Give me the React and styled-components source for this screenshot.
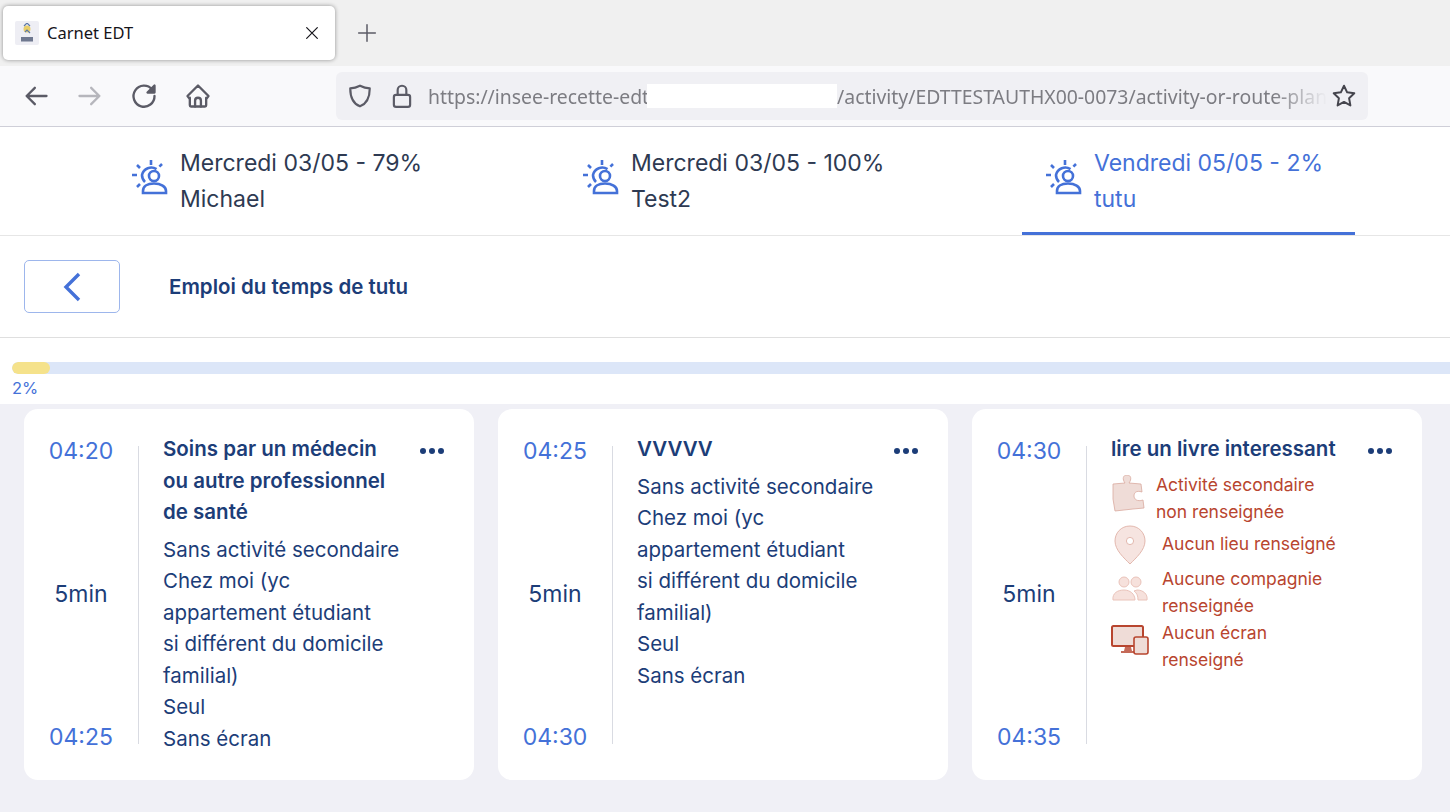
import React from "react";
import styled, { createGlobalStyle } from "styled-components";

const Global = createGlobalStyle`
  html, body { margin: 0; padding: 0; background: #fff; }
  body { font-family: "Inter", "Liberation Sans", sans-serif; overflow: hidden; }
  #root { width: 1450px; height: 812px; }
`;

const Page = styled.div`
  width: 1450px;
  height: 812px;
  display: flex;
  flex-direction: column;
  overflow: hidden;
`;

/* Browser chrome */
const TabStrip = styled.div`
  height: 66px;
  background: #f0f0f0;
  display: flex;
  align-items: center;
  box-sizing: border-box;
  padding: 0 0 0 3px;
  flex: none;
`;
const BrowserTab = styled.div`
  width: 332px;
  height: 54px;
  margin-top: -1px;
  background: #fff;
  border-radius: 5px;
  box-shadow: 0 0 4px rgba(0, 0, 0, 0.4);
  display: flex;
  align-items: center;
  padding: 0 15px 0 12px;
  box-sizing: border-box;
`;
const Favicon = styled.div`
  width: 24px;
  height: 24px;
  background: #eeeef4;
  border-radius: 2px;
  display: flex;
  align-items: center;
  justify-content: center;
  flex: none;
`;
const TabTitle = styled.span`
  flex: 1;
  margin-left: 8px;
  font-family: "Noto Sans", sans-serif;
  font-size: 16.5px;
  color: #15141a;
`;
const NewTab = styled.div`
  margin-left: 22px;
  display: flex;
`;
const Toolbar = styled.div`
  height: 60px;
  background: #f9f9fb;
  border-bottom: 1px solid #cfcfd8;
  display: flex;
  align-items: center;
  flex: none;
  box-sizing: content-box;
`;
const NavIcons = styled.div`
  display: flex;
  align-items: center;
  gap: 26px;
  padding-left: 22px;
  width: 336px;
  box-sizing: border-box;
`;
const UrlBar = styled.div`
  width: 1032px;
  height: 48px;
  background: #f0f0f4;
  border-radius: 6px;
  display: flex;
  align-items: center;
  padding: 0 11px 0 11px;
  box-sizing: border-box;
`;
const UrlIcons = styled.div`
  display: flex;
  align-items: center;
  gap: 16px;
  flex: none;
`;
const UrlText = styled.div`
  flex: 1;
  min-width: 0;
  margin: 0 4px 0 13px;
  font-family: "Noto Sans", sans-serif;
  font-size: 19.4px;
  color: #7c7c82;
  white-space: nowrap;
  overflow: hidden;
  display: flex;
  align-items: center;
  -webkit-mask-image: linear-gradient(to right, #000 94%, transparent 100%);
  mask-image: linear-gradient(to right, #000 94%, transparent 100%);
`;
const Redaction = styled.span`
  display: inline-block;
  width: 190px;
  height: 24px;
  margin-left: -2px;
  background: #fff;
  flex: none;
`;

/* Day tabs */
const DayTabs = styled.div`
  height: 108px;
  border-bottom: 1px solid #e6e6e6;
  display: flex;
  gap: 108px;
  padding-left: 108px;
  background: #fff;
  flex: none;
`;
const DayTab = styled.div`
  display: flex;
  align-items: flex-start;
  width: ${(p) => p.$width}px;
  padding: 18px 0 0 24px;
  height: 108px;
  box-sizing: border-box;
  flex: none;
  border-bottom: 3px solid ${(p) => (p.$active ? "#4471d8" : "transparent")};
  color: ${(p) => (p.$active ? "#4471d8" : "#2e3a52")};
`;
const DayIcon = styled.div`
  width: 36px;
  height: 36px;
  margin: 14px 12px 0 0;
  flex: none;
`;
const DayLabel = styled.div`
  font-size: 23px;
  line-height: 36px;
  white-space: nowrap;
`;

/* Page heading */
const Heading = styled.div`
  height: 101px;
  border-bottom: 1px solid #dfdfdf;
  display: flex;
  align-items: center;
  padding-left: 24px;
  box-sizing: content-box;
  flex: none;
`;
const BackButton = styled.div`
  width: 96px;
  height: 53px;
  border: 1px solid #9db6ec;
  border-radius: 5px;
  box-sizing: border-box;
  display: flex;
  align-items: center;
  justify-content: center;
  margin: 0 49px 0 0;
`;
const Title = styled.h1`
  margin: 0;
  font-size: 20.5px;
  font-weight: 600;
  color: #1c3d78;
`;

/* Progress */
const ProgressArea = styled.div`
  height: 66px;
  padding: 24px 0 0 12px;
  box-sizing: border-box;
  background: #fff;
  flex: none;
`;
const Track = styled.div`
  height: 12px;
  background: #dce6f8;
  border-radius: 6px 0 0 6px;
  overflow: hidden;
`;
const Fill = styled.div`
  height: 100%;
  background: #f5e28b;
  border-radius: 6px;
`;
const ProgressValue = styled.div`
  font-size: 16.5px;
  line-height: 20px;
  margin-top: 4px;
  color: #4471d8;
`;

/* Cards */
const Board = styled.div`
  flex: 1;
  background: #f0f0f6;
  display: flex;
  gap: 24px;
  padding: 5px 24px 0;
`;
const Card = styled.div`
  width: 450px;
  height: 371px;
  background: #fff;
  border-radius: 14px;
  display: flex;
  padding: 24px 0 24px 0;
  box-sizing: border-box;
  position: relative;
  flex: none;
`;
const TimeColumn = styled.div`
  width: 115px;
  height: 298px;
  margin-top: 13px;
  border-right: 1px solid #d9dbe2;
  display: flex;
  flex-direction: column;
  justify-content: space-between;
  align-items: center;
  box-sizing: border-box;
  flex: none;
`;
const Time = styled.div`
  font-size: 23px;
  line-height: 28px;
  color: #4471d8;
  width: 90px;
  text-align: center;
  margin: ${(p) => (p.$end ? "0 0 -7px" : "-9px 0 0")};
`;
const Duration = styled.div`
  font-size: 23px;
  line-height: 28px;
  color: #1c3d78;
  width: 90px;
  text-align: center;
`;
const Body = styled.div`
  flex: 1;
  min-width: 0;
  padding-left: 24px;
`;
const TitleRow = styled.div`
  display: flex;
  justify-content: space-between;
  align-items: flex-start;
  padding-right: 30px;
`;
const ActivityName = styled.div`
  font-size: 20.5px;
  font-weight: 600;
  line-height: 31.5px;
  color: #1c3d78;
  white-space: pre-line;
`;
const More = styled.div`
  display: flex;
  gap: 3px;
  margin-top: 15px;
  flex: none;
`;
const Dot = styled.span`
  width: 6px;
  height: 6px;
  border-radius: 50%;
  background: #1c3d78;
`;
const Details = styled.div`
  margin-top: 6px;
  font-size: 20.5px;
  line-height: 31.5px;
  color: #1c3d78;
  white-space: pre-line;
`;
const Missing = styled.div`
  display: flex;
  align-items: flex-start;
  gap: ${(p) => p.$gap || 13}px;
`;
const MissingIcon = styled.div`
  width: 38px;
  flex: none;
  display: flex;
  justify-content: center;
  padding-top: ${(p) => p.$top || 0}px;
`;
const MissingText = styled.div`
  font-size: 17.5px;
  line-height: 27px;
  margin-top: ${(p) => p.$top || 0}px;
  color: #b8452f;
  white-space: pre-line;
`;

const stroke = { fill: "none", strokeLinecap: "round", strokeLinejoin: "round" };

const Icon = ({ size = 24, color = "#5b5b66", width = 2, children }) => (
  <svg width={size} height={size} viewBox="0 0 24 24" stroke={color} strokeWidth={width} {...stroke}>
    {children}
  </svg>
);

const SunPerson = ({ color = "#4471d8" }) => (
  <svg width="36" height="36" viewBox="0 0 36 36" stroke={color} strokeWidth="2.6" fill="none" strokeLinecap="butt">
    <path d="M19 1v5M5 6l3 3M30 5l-2.600 2.600M0 16h5M8 25l-3 3" />
    <path d="M24.500 10.200A9.500 9.500 0 0 0 10 16c0 3 1.300 5.400 3 7" />
    <circle cx="22" cy="17" r="5" />
    <path d="M11 34v-2c0-4.500 4-7.500 11-7.500s12 3 12 7.500v2z" />
  </svg>
);

const Puzzle = () => (
  <svg width="36" height="40" viewBox="0 0 36 40">
    <path
      d="M1 9l12-1c-3-4-2-8 2-8s5 4 2 8l12 1 1 8c-6-2-8 1-8 4s3 6 9 4l1 8-11 1-18 2-2-12z"
      fill="#efdcd7"
      stroke="#d9a99e"
      strokeWidth=".8"
    />
  </svg>
);
const Pin = () => (
  <svg width="32" height="40" viewBox="0 0 32 40">
    <path
      d="M16 1C7 1 1 8 1 16c0 9 9 17 15 23 6-6 15-14 15-23C31 8 25 1 16 1z"
      fill="#f6e4e0"
      stroke="#e3b8ae"
      strokeWidth="1"
    />
    <circle cx="16" cy="16" r="3.600" fill="#fff" stroke="#e3b8ae" />
  </svg>
);
const People = () => (
  <svg width="36" height="26" viewBox="0 0 36 26" fill="#f6e1dc" stroke="#eac3ba" strokeWidth="1">
    <circle cx="12" cy="6" r="5" />
    <circle cx="24" cy="6" r="5" />
    <path d="M1 24c-1-7 5-10 11-10s11 4 11 10z" />
    <path d="M25 14c6 0 11 4 10 10H26c0-4-1-7-4-9z" />
  </svg>
);
const Screens = () => (
  <svg width="38" height="30" viewBox="0 0 38 30">
    <rect x="1" y="1" width="31" height="20" rx="1.500" fill="#efdcd7" stroke="#b8452f" strokeWidth="2" />
    <path d="M14 22h6l1 4h4v2H10v-2h3z" fill="#c56a58" />
    <rect x="23" y="12" width="14" height="17" rx="2" fill="#efdcd7" stroke="#b8452f" strokeWidth="1.600" />
  </svg>
);

const Dots = () => (
  <More>
    <Dot />
    <Dot />
    <Dot />
  </More>
);

const TimeCol = ({ start, end }) => (
  <TimeColumn>
    <Time>{start}</Time>
    <Duration>5min</Duration>
    <Time $end>{end}</Time>
  </TimeColumn>
);

const days = [
  { label: "Mercredi 03/05 - 79%", who: "Michael", width: 343 },
  { label: "Mercredi 03/05 - 100%", who: "Test2", width: 355 },
  { label: "Vendredi 05/05 - 2%", who: "tutu", width: 333, active: true },
];

export default function App() {
  return (
    <Page>
      <Global />
      <TabStrip>
        <BrowserTab>
          <Favicon>
            <svg width="18" height="20" viewBox="0 0 18 20">
              <circle cx="9" cy="6" r="3.500" fill="#e9cf6a" />
              <path d="M6 3l3-3 3 3M7 9l2-2 3 3" fill="none" stroke="#5c78a8" strokeWidth="1.200" />
              <rect x="3" y="14" width="12" height="4.500" fill="#44506e" opacity=".75" />
            </svg>
          </Favicon>
          <TabTitle>Carnet EDT</TabTitle>
          <Icon size={16} color="#15141a" width={1.8}>
            <path d="M4 4l16 16M20 4L4 20" />
          </Icon>
        </BrowserTab>
        <NewTab>
          <Icon size={20} color="#5b5b66" width={1.8}>
            <path d="M12 2v20M2 12h20" />
          </Icon>
        </NewTab>
      </TabStrip>

      <Toolbar>
        <NavIcons>
          <Icon size={28}>
            <path d="M21 12H4M11 5l-7 7 7 7" />
          </Icon>
          <Icon size={28} color="#b6b6bc">
            <path d="M3 12h17M13 5l7 7-7 7" />
          </Icon>
          <Icon size={28}>
            <path d="M19 6.500A9 9 0 1 0 21 12" />
            <path d="M21 3v6h-6z" fill="#5b5b66" />
          </Icon>
          <Icon size={28}>
            <path d="M3 12l9-9 9 9-1.500 2-.5-.5V20a1 1 0 0 1-1 1H6a1 1 0 0 1-1-1v-6.500l-.5.5z" />
            <path d="M9.500 21v-5a2.500 2.500 0 0 1 5 0v5" />
          </Icon>
        </NavIcons>
        <UrlBar>
          <UrlIcons>
            <Icon size={26}>
              <path d="M12 2.500c3 1.500 6 2.300 9 2.500 0 7-1.500 13.500-9 16.500C4.500 18.500 3 12 3 5c3-.2 6-1 9-2.500z" />
            </Icon>
            <Icon size={26}>
              <rect x="4.500" y="11" width="15" height="11" rx="2" />
              <path d="M8 11V6.500a4 4 0 0 1 8 0V11" />
            </Icon>
          </UrlIcons>
          <UrlText>
            <span>https://insee-recette-edt</span>
            <Redaction />
            <span>/activity/EDTTESTAUTHX00-0073/activity-or-route-planner</span>
          </UrlText>
          <Icon size={26} color="#45454d" width={1.8}>
            <path d="M12 2.500l2.900 6.100 6.600.9-4.800 4.600 1.200 6.600L12 17.500l-5.900 3.200 1.200-6.600L2.500 9.500l6.600-.9z" />
          </Icon>
        </UrlBar>
      </Toolbar>

      <DayTabs>
        {days.map((d) => (
          <DayTab key={d.who} $active={d.active} $width={d.width}>
            <DayIcon>
              <SunPerson />
            </DayIcon>
            <DayLabel>
              {d.label}
              <br />
              {d.who}
            </DayLabel>
          </DayTab>
        ))}
      </DayTabs>

      <Heading>
        <BackButton>
          <svg width="20" height="30" viewBox="0 0 20 30" fill="none" stroke="#4471d8" strokeWidth="3.400">
            <path d="M17 2L4 15l13 13" />
          </svg>
        </BackButton>
        <Title>Emploi du temps de tutu</Title>
      </Heading>

      <ProgressArea>
        <Track>
          <Fill style={{ width: `${(38 / 1438) * 100}%` }} />
        </Track>
        <ProgressValue>2%</ProgressValue>
      </ProgressArea>

      <Board>
        <Card>
          <TimeCol start="04:20" end="04:25" />
          <Body>
            <TitleRow>
              <ActivityName>{"Soins par un médecin\nou autre professionnel\nde santé"}</ActivityName>
              <Dots />
            </TitleRow>
            <Details>
              {"Sans activité secondaire\nChez moi (yc\nappartement étudiant\nsi différent du domicile\nfamilial)\nSeul\nSans écran"}
            </Details>
          </Body>
        </Card>
        <Card>
          <TimeCol start="04:25" end="04:30" />
          <Body>
            <TitleRow>
              <ActivityName>VVVVV</ActivityName>
              <Dots />
            </TitleRow>
            <Details>
              {"Sans activité secondaire\nChez moi (yc\nappartement étudiant\nsi différent du domicile\nfamilial)\nSeul\nSans écran"}
            </Details>
          </Body>
        </Card>
        <Card>
          <TimeCol start="04:30" end="04:35" />
          <Body>
            <TitleRow>
              <ActivityName>lire un livre interessant</ActivityName>
              <Dots />
            </TitleRow>
            <Details>
              <Missing $gap={7}>
                <MissingIcon $top={4}>
                  <Puzzle />
                </MissingIcon>
                <MissingText>{"Activité secondaire\nnon renseignée"}</MissingText>
              </Missing>
              <Missing>
                <MissingIcon>
                  <Pin />
                </MissingIcon>
                <MissingText $top={5}>Aucun lieu renseigné</MissingText>
              </Missing>
              <Missing>
                <MissingIcon $top={11}>
                  <People />
                </MissingIcon>
                <MissingText>{"Aucune compagnie\nrenseignée"}</MissingText>
              </Missing>
              <Missing>
                <MissingIcon $top={6}>
                  <Screens />
                </MissingIcon>
                <MissingText>{"Aucun écran\nrenseigné"}</MissingText>
              </Missing>
            </Details>
          </Body>
        </Card>
      </Board>
    </Page>
  );
}
